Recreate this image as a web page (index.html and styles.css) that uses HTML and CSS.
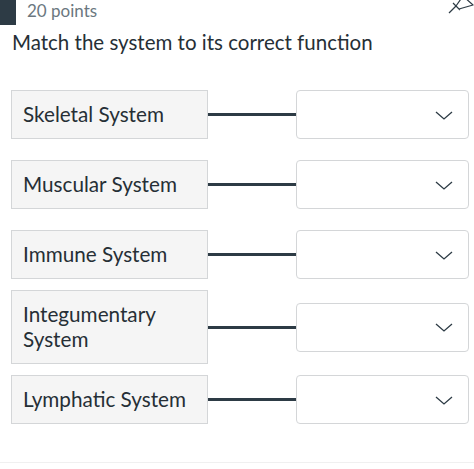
FILE: index.html
```html
<!DOCTYPE html>
<html lang="en">
<head>
    <meta charset="UTF-8">
    <meta name="viewport" content="width=device-width, initial-scale=1.0">
    <title>Quiz Question</title>
    <link rel="stylesheet" href="styles.css">
</head>
<body>
    <div class="question">
        <div class="header">
            <div class="marker"></div>
            <span class="points">20 points</span>
            <svg class="pin" width="26" height="16" viewBox="0 0 26 16">
                <!-- pushpin, tilted -->
                <path d="M1 15 L8 8" stroke="#2d3b45" stroke-width="1.2" fill="none"/>
                <path d="M5 5 L12 12 M8 8 L15 -2 L25 7 L11 11" stroke="#2d3b45" stroke-width="1.2" fill="none" stroke-linejoin="round"/>
            </svg>
        </div>
        <h1>Match the system to its correct function</h1>

        <div class="pairs">
            <div class="pair spaced">
                <div class="term">Skeletal System</div>
                <div class="link"></div>
                <div class="select"><svg class="chevron" width="18" height="9" viewBox="0 0 18 9"><path d="M1 1 L9 8 L17 1"/></svg></div>
            </div>
            <div class="pair spaced">
                <div class="term">Muscular System</div>
                <div class="link"></div>
                <div class="select"><svg class="chevron" width="18" height="9" viewBox="0 0 18 9"><path d="M1 1 L9 8 L17 1"/></svg></div>
            </div>
            <div class="pair">
                <div class="term">Immune System</div>
                <div class="link"></div>
                <div class="select"><svg class="chevron" width="18" height="9" viewBox="0 0 18 9"><path d="M1 1 L9 8 L17 1"/></svg></div>
            </div>
            <div class="pair">
                <div class="term">Integumentary<br>System</div>
                <div class="link"></div>
                <div class="select"><svg class="chevron" width="18" height="9" viewBox="0 0 18 9"><path d="M1 1 L9 8 L17 1"/></svg></div>
            </div>
            <div class="pair">
                <div class="term">Lymphatic System</div>
                <div class="link"></div>
                <div class="select"><svg class="chevron" width="18" height="9" viewBox="0 0 18 9"><path d="M1 1 L9 8 L17 1"/></svg></div>
            </div>
        </div>
        <div class="footer"></div>
    </div>
</body>
</html>
```

FILE: styles.css
```css
body {
    margin: 0;
    background: #ffffff;
    color: #2d3b45;
    font-family: Lato, "Open Sans", sans-serif;
}
.question {
    width: 474px;
}
.header {
    display: flex;
    align-items: flex-start;
    height: 26px;
    position: relative;
}
.marker {
    width: 16px;
    height: 25px;
    background: #2d3b45;
}
.points {
    margin-left: 11px;
    padding-top: 1px;
    font-size: 17px;
    line-height: 20px;
    color: #6b7780;
}
.pin {
    position: absolute;
    right: 0;
    top: -2px;
}
h1 {
    margin: 3px 0 0 12px;
    font-size: 20.5px;
    font-weight: 400;
    line-height: 26px;
    color: #262f36;
}
.pairs {
    display: flex;
    flex-direction: column;
    gap: 11px;
    margin-top: 35px;
    padding-left: 11px;
}
.pair {
    display: flex;
    align-items: center;
}
.pair.spaced {
    margin-bottom: 10px;
}
.term {
    box-sizing: border-box;
    width: 197px;
    min-height: 49px;
    padding: 11px 11px;
    background: #f5f5f5;
    border: 1px solid #d4d6d8;
    font-size: 20.7px;
    line-height: 25px;
    color: #262f36;
}
.link {
    width: 88px;
    height: 3px;
    background: #2d3b45;
}
.select {
    box-sizing: border-box;
    width: 173px;
    height: 49px;
    border: 1px solid #d4d6d8;
    border-radius: 4px;
    display: flex;
    align-items: center;
    justify-content: flex-end;
    padding-right: 15px;
}
.chevron {
    margin-top: 1px;
}
.chevron path {
    fill: none;
    stroke: #2d3b45;
    stroke-width: 1.3;
}
.footer {
    margin-top: 38px;
    border-top: 1px solid #f0f0f0;
}
```
